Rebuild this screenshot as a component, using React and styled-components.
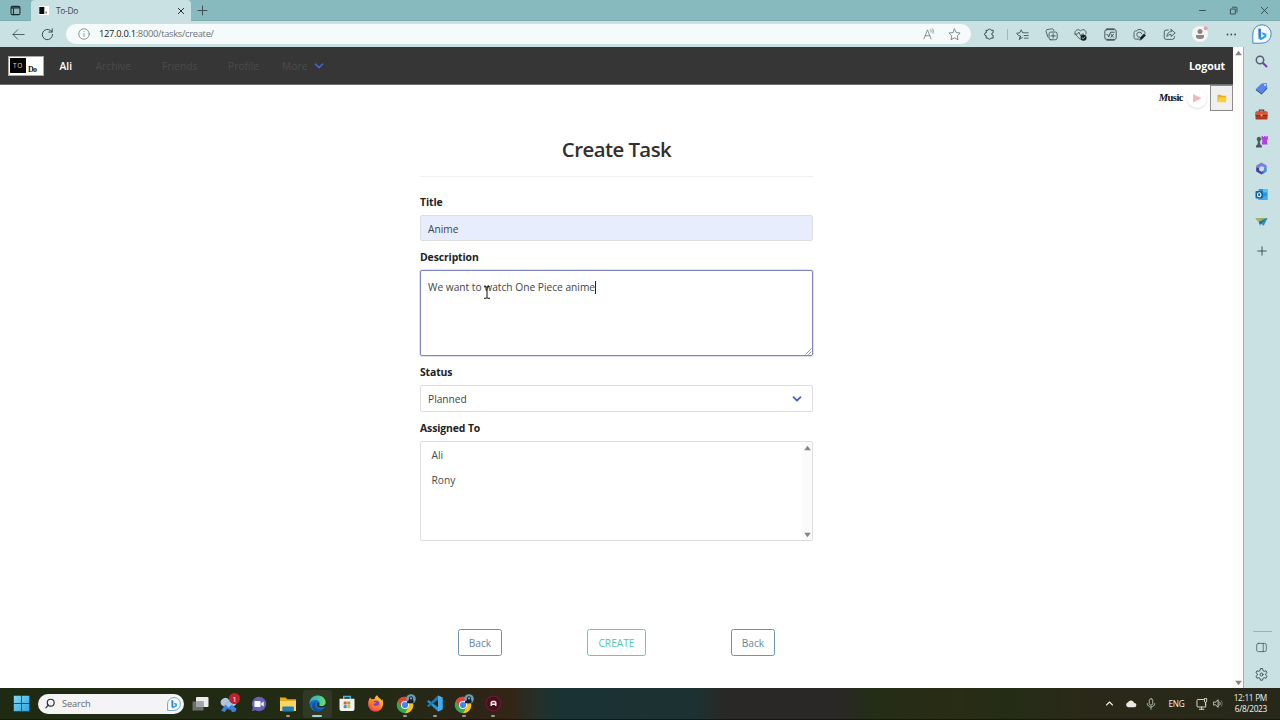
import React from 'react';
import styled, { createGlobalStyle } from 'styled-components';

const GlobalStyle = createGlobalStyle`
  * {
    box-sizing: border-box;
  }
  body {
    margin: 0;
    overflow: hidden;
    font-family: 'Open Sans', 'Noto Sans', sans-serif;
    color: #363636;
  }
  svg {
    display: block;
    flex: none;
  }
`;

const Screen = styled.div`
  display: flex;
  flex-direction: column;
  width: 1280px;
  height: 720px;
  overflow: hidden;
  background: #fff;
`;

/* ---------- browser chrome ---------- */

const TabStrip = styled.div`
  display: flex;
  height: 21px;
  background: #86babe;
`;

const TabActions = styled.div`
  display: flex;
  align-items: center;
  justify-content: center;
  width: 31px;
  border-bottom: 1px solid #7badb1;
  border-bottom-right-radius: 3px;
`;

const Tab = styled.div`
  display: flex;
  align-items: center;
  width: 160px;
  padding: 0 6px 0 8px;
  background: #cae1e3;
  border-radius: 4px 4px 0 0;
`;

const Favicon = styled.span`
  display: flex;
  width: 10px;
  height: 9px;
  background: #fff;
`;

const TabTitle = styled.span`
  flex: 1;
  margin-left: 7px;
  font-size: 8.4px;
  line-height: 12px;
  letter-spacing: -0.3px;
  color: #38474a;
`;

const NewTab = styled.div`
  display: flex;
  align-items: center;
  flex: 1;
  padding-left: 6px;
  border-bottom: 1px solid #7badb1;
`;

const WindowControls = styled.div`
  display: flex;
  align-items: center;
  gap: 22px;
  padding-right: 11px;
  border-bottom: 1px solid #7badb1;
`;

const Toolbar = styled.div`
  display: flex;
  align-items: center;
  height: 26px;
  padding-left: 3px;
  background: #cae1e3;
`;

const Slot = styled.div`
  position: relative;
  display: flex;
  align-items: center;
  justify-content: center;
  flex: none;
  width: ${(props) => props.$width || 29.4}px;
  height: ${(props) => (props.$height ? `${props.$height}px` : 'auto')};
`;

const AddressBar = styled.div`
  display: flex;
  align-items: center;
  flex: none;
  width: 905px;
  height: 20px;
  margin-left: 4px;
  padding: 0 8px 0 12px;
  border-radius: 10px;
  background: #f5fafb;
`;

const Url = styled.span`
  flex: 1;
  margin-left: 9px;
  font-size: 9.3px;
  line-height: 14px;
  letter-spacing: -0.28px;
  color: #6b7274;

  b {
    font-weight: 400;
    color: #14191a;
  }
`;

const ToolbarDivider = styled.span`
  width: 1px;
  height: 11px;
  background: #a3b8ba;
`;

const Avatar = styled.span`
  display: flex;
  align-items: center;
  justify-content: center;
  width: 16px;
  height: 16px;
  border-radius: 50%;
  background: #f3f5f5;
`;

const Workspace = styled.div`
  display: flex;
  height: 641px;
`;

const Page = styled.div`
  display: flex;
  flex-direction: column;
  width: 1233px;
  background: #fff;
`;

const PageScroll = styled.div`
  display: flex;
  flex-direction: column;
  align-items: center;
  justify-content: space-between;
  width: 10px;
  padding: 3px 0 2px;
  background: #fcfcfc;
`;

const Sidebar = styled.aside`
  display: flex;
  flex-direction: column;
  align-items: center;
  width: 37px;
  padding-top: 1px;
  border-left: 1px solid #9fb3b5;
  background: #cae1e3;
`;

const SidebarRule = styled.span`
  width: 19px;
  height: 1px;
  margin: auto 0 2px;
  background: #96b5b8;
`;

/* ---------- site ---------- */

const Navbar = styled.nav`
  display: flex;
  align-items: center;
  height: 38px;
  padding: 0 8px;
  background: #363636;
  border-bottom: 1px solid #6f6f6f;
`;

const Logo = styled.div`
  display: flex;
  width: 36px;
  height: 20px;
  padding: 1px;
  border: 1px solid #a9a9a9;
  background: #fff;
`;

const LogoLeft = styled.span`
  display: flex;
  align-items: center;
  justify-content: center;
  width: 16px;
  height: 15px;
  background: #000;
  color: #ddd;
  font-size: 6.5px;
  letter-spacing: 0.8px;
`;

const LogoRight = styled.span`
  align-self: flex-end;
  margin-left: 2px;
  font: bold 8px/9px 'Liberation Serif', serif;
  letter-spacing: -0.8px;
  color: #111;
`;

const NavItem = styled.a`
  width: ${(props) => props.$width}px;
  font-size: 10.3px;
  line-height: 16px;
  font-weight: ${(props) => (props.$active ? 600 : 400)};
  color: ${(props) => (props.$active ? '#fff' : '#4b4b4b')};
  white-space: nowrap;
`;

const Logout = styled.a`
  margin-left: auto;
  font-size: 10.6px;
  font-weight: 700;
  letter-spacing: -0.1px;
  color: #fff;
`;

const MusicBar = styled.div`
  display: flex;
  align-items: center;
  justify-content: flex-end;
  height: 26px;
`;

const MusicLabel = styled.span`
  font: bold 10.5px/14px 'Liberation Serif', serif;
  letter-spacing: -0.5px;
  color: #111;

  &::first-letter {
    font-style: italic;
  }
`;

const PlayButton = styled.span`
  display: flex;
  align-items: center;
  justify-content: center;
  width: 20px;
  height: 20px;
  margin: 0 3px 0 4px;
  border-radius: 50%;
  background: #fff;
  box-shadow: 0 1px 2px rgba(0, 0, 0, 0.14);
`;

const FolderButton = styled.span`
  display: flex;
  align-items: center;
  justify-content: center;
  width: 23px;
  height: 26px;
  border: 1px solid #8b8b8b;
  background: #efefef;
`;

const Form = styled.form`
  display: flex;
  flex-direction: column;
  width: 393px;
  margin: 23px auto 0;
`;

const Heading = styled.h1`
  height: 43px;
  margin: 0 0 17px;
  border-bottom: 1px solid #f0f0f0;
  text-align: center;
  font-size: 20.4px;
  font-weight: 600;
  line-height: 31px;
  letter-spacing: -0.55px;
  color: #303030;
`;

const Label = styled.label`
  height: 16px;
  margin-bottom: ${(props) => props.$gap || 5}px;
  font-size: 10.4px;
  font-weight: 700;
  line-height: 16px;
  letter-spacing: -0.1px;
  color: #222;
`;

const Field = styled.div`
  position: relative;
  display: flex;
  justify-content: space-between;
  height: ${(props) => props.$height}px;
  margin-bottom: ${(props) => props.$after}px;
  padding: 5px 10px 0 7px;
  border: 1px solid #dedede;
  border-radius: 2px;
  background: ${(props) => (props.$filled ? '#e7edfc' : '#fff')};
  font-size: 10.2px;
  line-height: 17px;
  color: #424446;
`;

const FocusedField = styled(Field)`
  padding-top: 8px;
  border-color: #7f85bf;
  box-shadow: 0 0 0 1px #dfe2f5;
`;

const FieldIcon = styled.span`
  padding-top: 3px;
`;

const Caret = styled.span`
  display: inline-block;
  width: 1px;
  height: 13px;
  margin-right: -1px;
  vertical-align: -3px;
  background: #222;
`;

const Pointer = styled.svg`
  position: absolute;
  left: 62px;
  top: 15px;
`;

const Grip = styled.svg`
  position: absolute;
  right: 0;
  bottom: 0;
`;

const ListBox = styled.div`
  display: flex;
  justify-content: space-between;
  height: 100px;
  border: 1px solid #dedede;
  border-radius: 2px;
`;

const Options = styled.div`
  display: flex;
  flex-direction: column;
  padding: 1px 0 0 10.5px;
`;

const Option = styled.span`
  height: 24.6px;
  font-size: 10.2px;
  line-height: 24px;
  color: #4a4a4a;
`;

const ListScroll = styled.div`
  display: flex;
  flex-direction: column;
  justify-content: space-between;
  align-items: center;
  width: 10px;
  padding: 3px 0 2px;
  background: #fbfbfb;
`;

const Actions = styled.div`
  display: grid;
  grid-template-columns: repeat(3, 136.5px);
  justify-items: center;
  width: 409.5px;
  margin: 88px auto 0;
`;

const Button = styled.span`
  width: ${(props) => props.$width}px;
  height: 27px;
  border: 1px solid ${(props) => (props.$primary ? '#5ccbb8' : '#6f93a8')};
  border-radius: 2.5px;
  text-align: center;
  font-size: 10.2px;
  line-height: 26px;
  color: ${(props) => (props.$primary ? '#4fc7b2' : '#6488a0')};
`;

/* ---------- taskbar ---------- */

const Taskbar = styled.footer`
  display: flex;
  align-items: center;
  height: 32px;
  padding-left: 13px;
  border-bottom: 1px solid #15180f;
  background: linear-gradient(
    90deg,
    #1f2a12 0,
    #222b14 330px,
    #262815 420px,
    #2d2417 480px,
    #332516 510px,
    #24302c 540px,
    #1a3234 560px,
    #1c3132 690px,
    #292826 730px,
    #2a2827 840px,
    #242d17 870px,
    #2a2c15 960px,
    #242c16 1010px,
    #2a2919 1080px,
    #272819 1280px
  );
`;

const SearchBox = styled.div`
  display: flex;
  align-items: center;
  width: 146px;
  height: 20px;
  margin: 0 1.5px 0 8px;
  padding: 0 3px 0 7px;
  border-radius: 10px;
  background: #f3f4f3;
`;

const SearchText = styled.span`
  flex: 1;
  margin-left: 6px;
  font-size: 9.2px;
  letter-spacing: -0.1px;
  color: #66696a;
`;

const AppSlot = styled(Slot)`
  height: 28px;
  border-radius: 3px;
  background: ${(props) => (props.$focused ? 'rgba(255, 255, 255, 0.07)' : 'none')};

  &::after {
    content: '';
    position: absolute;
    bottom: 1px;
    width: ${(props) => (props.$focused ? 10 : 4)}px;
    height: ${(props) => (props.$running ? 2 : 0)}px;
    border-radius: 1px;
    background: ${(props) => (props.$focused ? '#9fd3dc' : '#9b9c92')};
  }
`;

const Badge = styled.span`
  position: absolute;
  top: 3px;
  right: 4px;
  width: 11px;
  height: 11px;
  border-radius: 50%;
  background: #c2202c;
  color: #fff;
  font-size: 8px;
  line-height: 11px;
  text-align: center;
`;

const Tray = styled.div`
  display: flex;
  align-items: center;
  margin-left: auto;
  padding-right: 13px;
  color: #f1f1ee;
`;

const Language = styled.span`
  width: 33px;
  padding-right: 2px;
  text-align: center;
  font-size: 8.2px;
  letter-spacing: -0.3px;
`;

const Clock = styled.div`
  width: 41px;
  font-size: 8.3px;
  line-height: 10.6px;
  letter-spacing: -0.3px;
  text-align: right;
  white-space: nowrap;
`;

/* ---------- icons ---------- */

const Line = ({ size = 12, width = 1, color = '#33474a', view = 16, children }) => (
  <svg
    width={size}
    height={size}
    viewBox={`0 0 ${view} ${view}`}
    fill="none"
    stroke={color}
    strokeWidth={width}
    strokeLinecap="round"
    strokeLinejoin="round"
  >
    {children}
  </svg>
);

const Chevron = () => (
  <Line size={10} view={10} width={1.8} color="#485fc7">
    <path d="M1.5 3.2 5 6.7 8.5 3.2" />
  </Line>
);

const Arrow = ({ down }) => (
  <svg width="7" height="6" viewBox="0 0 7 6">
    <path d={down ? 'M.2.8h6.6L3.5 5.3Z' : 'M.2 5.3h6.6L3.5.8Z'} fill="#858585" />
  </svg>
);

const BingBubble = ({ size, border }) => (
  <svg width={size} height={size} viewBox="0 0 20 20">
    <defs>
      <linearGradient id="bing" x1="0" y1="0" x2="1" y2="1">
        <stop offset="0" stopColor="#2a66d8" />
        <stop offset="1" stopColor="#38bde8" />
      </linearGradient>
    </defs>
    <path d="M10 .8a9.2 9.2 0 1 1 0 18.4H.8V10A9.2 9.2 0 0 1 10 .8Z" fill="#f4fafd" stroke={border} strokeWidth="1" />
    <path d="M6.4 4.2 9 5.1v8.6l3.6-2.1-1.8-.9-1-2.5 4.6 1.6v3.2L9 16.2l-2.6-1.6Z" fill="url(#bing)" />
  </svg>
);

const ChromeIcon = () => (
  <svg width="21" height="20" viewBox="0 0 21 20">
    <circle cx="10" cy="11" r="8.3" fill="#36a853" />
    <path d="M2.8 6.9A8.3 8.3 0 0 1 17.2 6.9H10L6.4 13Z" fill="#e64335" />
    <path d="M17.2 6.9A8.3 8.3 0 0 1 10 19.3L13.6 13 10 6.9Z" fill="#fbc116" />
    <circle cx="10" cy="11" r="4" fill="#fff" />
    <circle cx="10" cy="11" r="3.1" fill="#4285f4" />
    <circle cx="16" cy="5" r="4.8" fill="#6d9db5" />
    <path d="M12.1 9.3c-.4-2.6 1.2-2.8 1.9-3.4-1-3.7 3.1-5 4-2 .4 1.2-.1 1.8-.3 2.2 1.8.6 1.2 2.3 0 3.2Z" fill="#17202b" />
    <circle cx="16" cy="4.3" r="1.1" fill="#8fb4c6" />
  </svg>
);

const EdgeIcon = () => (
  <svg width="17" height="17" viewBox="0 0 17 17">
    <defs>
      <linearGradient id="edge" x1="0" y1="0" x2="1" y2="0.2">
        <stop offset="0" stopColor="#2aa5df" />
        <stop offset="1" stopColor="#67da69" />
      </linearGradient>
    </defs>
    <circle cx="8.5" cy="8.5" r="8" fill="#1470bd" />
    <path d="M.5 8.4C.8 3.4 4.4.5 8.6.5c5 0 8 3.4 8 6.8 0 2.5-1.8 4-4.2 4-2 0-2.8-.8-2.2-1.6 1.6-2-.2-4.8-3.5-4.8C3.2 4.9.9 6.5.5 8.4Z" fill="url(#edge)" />
    <path d="M6.8 7C4.6 9.9 6.8 14.3 10.8 14.3c1.5 0 3-.6 4.3-1.4-1.6 2.7-4 3.7-6.3 3.6C5 16.3 2.3 12.6 3.6 9.4 4.2 8 5.3 7.2 6.8 7Z" fill="#174c98" />
    <path d="M8.2 8.2c-.9 2.6 1.4 4.6 4.4 4.4 1.3 0 2.6-.5 3.7-1.4l.5-2.4c-1 1.7-2.6 2.5-4.2 2.5-2.2 0-3-.8-2.4-1.7.4-.8-.6-2.2-2-1.4Z" fill="#1f2c17" />
  </svg>
);

const FolderIcon = ({ size }) => (
  <svg width={size} height={size} viewBox="0 0 18 18">
    <path d="M1 2.5h5.5l1.8 1.8H17V15H1Z" fill="#e5a91e" />
    <path d="M1 6h16v10H1Z" fill="#fad665" />
    <path d="M4.3 11.5h9.6a1 1 0 0 1 1 1v4H3.3v-4a1 1 0 0 1 1-1Z" fill="#1f7db9" />
  </svg>
);

const toolbarIcons = [
  <Line size={13}>
    <path d="M4.5 13 5.6 10 2.6 8.8.8 6.4 4.7 5.9 6.4 2.2 8.1 5.9H15M5.6 10 4 14.2 8 11.6M10 9.3h5M10.5 12.5H15" />
  </Line>,
  <Line size={13}>
    <path d="M7 14.5h5.5a2.5 2.5 0 0 0 2.5-2.5V7a2 2 0 0 0-2-2H7a2 2 0 0 0-2 2v5.5a2 2 0 0 0 2 2ZM3.5 11 1.3 4.2A2 2 0 0 1 2.4 2l5.8-1a2 2 0 0 1 2.2 1.2l.5 1.2M10 7v5.4M7.3 9.7h5.4" />
  </Line>,
  <Line size={13}>
    <path d="M7.7 14 2 8.2C-.8 4.7 4.2-.4 8 3.5c3.8-3.8 8.6.7 6.6 4M1 7.5h3.2L6 5l2.4 5 1.4-2.5h2" />
    <circle cx="11.8" cy="12" r="3.7" fill="#15201f" stroke="none" />
    <path d="m10.1 12.2 1.2 1.1 2.1-2.2" stroke="#cae1e3" />
  </Line>,
  <Line size={13} width={1.1}>
    <rect x="1" y="2" width="14" height="12" rx="2" />
    <path d="M3.4 1h9.2M3.4 15h9.2M3.5 8l1 .1 1.3 3L8 5.2h4.5M8.6 7.7l3 3.5M11.6 7.7l-3 3.5" />
  </Line>,
  <Line size={13}>
    <path d="M7 13.7H3.2A2 2 0 0 1 1.3 12V5.4A2 2 0 0 1 3 3.6h1.7L6 1.8h4l1.3 1.8H13a2 2 0 0 1 1.7 1.7V7" />
    <path d="M8.2 11.4A3.2 3.2 0 1 1 11 7.5" />
    <path d="m8.4 14.5.9-3.2 4.4-4 1.8 1.8-4.3 4.5Z" fill="#111c1d" />
  </Line>,
  <Line size={13}>
    <path d="M6.5 2.5H4A2.5 2.5 0 0 0 1.5 5v6.5A2.5 2.5 0 0 0 4 14h7.5a2.5 2.5 0 0 0 2.5-2.5v-1M10 1.8l5 4.4-5 4.2V8C7.7 8 6 8.7 4.8 10.5 5 6.7 7 4.6 10 4.4Z" />
  </Line>,
];

const sidebarIcons = [
  <svg width="13" height="13" viewBox="0 0 13 13">
    <circle cx="5" cy="5" r="3.7" fill="#c9e6ec" stroke="#5c5d67" strokeWidth="1.5" />
    <path d="m8.2 8.2 3.3 3.3" stroke="#8634ba" strokeWidth="2" strokeLinecap="round" />
  </svg>,
  <svg width="13" height="13" viewBox="0 0 13 13">
    <path d="M6.5 1.6 11.7 1l.5 4.2-5.6 6.1L.9 7Z" fill="#5785ec" />
    <path d="M.9 7 6.6 11.3l5.6-6.1v1.6l-5.6 5.7L.9 8.3Z" fill="#2c3fa8" />
    <circle cx="10" cy="3.1" r="1" fill="#d5e6f8" />
  </svg>,
  <svg width="13" height="13" viewBox="0 0 13 13">
    <path d="M4.3 4V2.2h4.4V4" fill="none" stroke="#7d3426" strokeWidth="1.2" />
    <rect x=".5" y="3.6" width="12" height="8" rx="1.2" fill="#b0391f" />
    <path d="M.5 4.8a1.2 1.2 0 0 1 1.2-1.2h9.6a1.2 1.2 0 0 1 1.2 1.2v2.4H.5Z" fill="#d6583a" />
    <path d="M.5 7h12v.9H.5Z" fill="#7d2c20" />
    <rect x="5.6" y="6.5" width="1.8" height="1.8" fill="#e8c1a9" />
  </svg>,
  <svg width="13" height="13" viewBox="0 0 13 13">
    <path d="M6.5 1h1.4v1H9V1h1.5v1h1V1h1.3v3.4l-.9.7.6 4.4H6.8l.7-4.4-1-.7Z" fill="#b13fe6" />
    <path d="M1 12.5v-1.7l1.4-1.2.7-3h-.7v-.9a2.2 2.2 0 1 1 3 0v.9h-.7l.7 3 1.5 1.2v1.7Z" fill="#4d5b60" />
  </svg>,
  <svg width="13" height="13" viewBox="0 0 13 13">
    <path d="M6.5.5 11.7 3.4v3L8.6 4.7 6 4.2 3.9 6.2l.2 3-2.9-1.5V3.6Z" fill="#7f7fd9" />
    <path d="M1.2 5.5 4 6l.3 2.5 2.2 1.2L9 8.6l.8 2.2-3.3 1.8L1.2 9.5Z" fill="#4340a8" />
    <path d="m9 5 2.7 1.2v3.3L6.5 12.6 8.9 8.6Z" fill="#4495d6" />
  </svg>,
  <svg width="13" height="13" viewBox="0 0 13 13">
    <rect x="3.5" y="1" width="9" height="11" rx="1" fill="#2b8fd9" />
    <path d="M8 1h4.5v3.5H8Z" fill="#52c5ee" />
    <path d="m3.5 7 4.5 2 4.5-2v5h-9Z" fill="#3bb1e6" />
    <rect x=".5" y="3" width="7.4" height="7.4" rx=".8" fill="#1064ac" />
    <ellipse cx="4.2" cy="6.7" rx="1.7" ry="2" fill="none" stroke="#fff" strokeWidth="1.1" />
  </svg>,
  <svg width="13" height="13" viewBox="0 0 13 13">
    <path d="M.5 3.5 12.5 3 8.8 10.8 5.8 8.8Z" fill="#2e91c6" />
    <path d="M.5 3.5 12.5 3 3.7 7.2Z" fill="#7fb36b" />
    <path d="M3.7 7.2 12.5 3 5.4 9v2.3Z" fill="#226a94" />
    <path d="M.5 3.5 7 3.2 3.2 6.2Z" fill="#d9a552" />
  </svg>,
];

const apps = [
  {
    icon: (
      <svg width="17" height="14" viewBox="0 0 17 14">
        <rect x="4" y="0" width="12.5" height="10" rx="1" fill="#ececea" />
        <path d="M.5 4.5h11v9H.5Z" fill="#6d6f6e" />
        <path d="M4 4.5h7.5V10H4Z" fill="#a3a5a4" />
      </svg>
    ),
  },
  {
    badge: '1',
    icon: (
      <svg width="18" height="18" viewBox="0 0 18 18">
        <path d="M1 9a4.5 4.5 0 0 1 8-4 4 4 0 0 1 7 4c-1 4-14 4-15 0Z" fill="#b3c6dc" />
        <path d="m8.5 6.5 4 .5-.3 3 4.3 3.8-1.2 3-3.3.2-1.5-2.5-1.5.3-1.7-1.3L4.8 17 1.2 15.7 5 10Z" fill="#3d83dc" />
        <path d="m8.5 6.5 4 .5-.5 2.5-3.5 3L5.5 9.5Z" fill="#9cc8f2" />
      </svg>
    ),
  },
  {
    icon: (
      <svg width="16" height="16" viewBox="0 0 16 16">
        <path d="M8 .8A7.2 7.2 0 1 1 4.5 14.3L1 15l.8-3.5A7.2 7.2 0 0 1 8 .8Z" fill="#6862b8" />
        <rect x="3.4" y="5" width="6.2" height="6" rx="1" fill="#fff" />
        <path d="m10.2 7.2 2.5-1.7v5l-2.5-1.7Z" fill="#fff" />
      </svg>
    ),
  },
  { running: true, icon: <FolderIcon size={18} /> },
  { running: true, focused: true, icon: <EdgeIcon /> },
  {
    icon: (
      <svg width="16" height="17" viewBox="0 0 16 17">
        <path d="M4.7 4V1.5h6.6V4" fill="none" stroke="#58b2d8" strokeWidth="1.4" />
        <path d="M.5 3.8h15V14a2 2 0 0 1-2 2h-11a2 2 0 0 1-2-2Z" fill="#f3f3f0" />
        <path d="M4.7 6.5h3v3h-3Z" fill="#e65a33" />
        <path d="M8.3 6.5h3v3h-3Z" fill="#73b539" />
        <path d="M4.7 10.1h3v3h-3Z" fill="#2a9bd6" />
        <path d="M8.3 10.1h3v3h-3Z" fill="#f0b41e" />
      </svg>
    ),
  },
  {
    icon: (
      <svg width="17" height="17" viewBox="0 0 17 17">
        <defs>
          <linearGradient id="fox" x1="0.8" y1="0" x2="0.2" y2="1">
            <stop offset="0" stopColor="#ffd83c" />
            <stop offset="0.5" stopColor="#ff8b26" />
            <stop offset="1" stopColor="#ee3156" />
          </linearGradient>
        </defs>
        <path d="M2 4.5 3 2.5l1.5 1.7 3-.2C8 2 9 1 10.2.3c.6 2.3 3.3 3 4.6 5.2l.4-1.2c2.6 6-.8 12.2-6.7 12.2S-.5 10.5 2 4.5Z" fill="url(#fox)" />
        <circle cx="9" cy="8.9" r="3.5" fill="#8941c5" />
        <path d="M4.8 6.8c2.4-.7 3 .5 4.4 1-1 1-2.8 1-2.8 2.2 1.7 2 4.8 1 5.4-1.2.8 2.9-1 4.8-3.6 4.8S4.3 11.5 4.8 6.8Z" fill="#fb7a2d" />
      </svg>
    ),
  },
  { running: true, icon: <ChromeIcon /> },
  {
    running: true,
    icon: (
      <svg width="17" height="17" viewBox="0 0 17 17">
        <path d="M12 .5 16.5 2.5v12L12 16.5 1 6.5 2.5 5 12 12.2Z" fill="#2495d8" />
        <path d="M12 .5 1 10.8l1.5 1.4L12 4.8Z" fill="#1b78b8" />
        <path d="m12 .5 4.5 2v12l-4.5 2Z" fill="#45acec" />
      </svg>
    ),
  },
  { running: true, icon: <ChromeIcon /> },
  {
    running: true,
    icon: (
      <svg width="17" height="17" viewBox="0 0 17 17">
        <circle cx="8.5" cy="8.5" r="7.3" fill="#45101e" stroke="#6b1a2e" strokeWidth="1.2" />
        <path d="M6.2 11V7.5L7.2 6.5h2.6l1 1V11M6.2 9.2h4.6" fill="none" stroke="#f1e8ea" strokeWidth="1.4" />
      </svg>
    ),
  },
];

const BrowserChrome = () => (
  <>
    <TabStrip>
      <TabActions>
        <Line size={11} width={1.5} color="#1d2b2d">
          <rect x="1.5" y="2" width="13" height="12" rx="2" />
          <path d="M2 4.2h12M5 5v9" />
        </Line>
      </TabActions>
      <Tab>
        <Favicon>
          <svg width="10" height="9" viewBox="0 0 10 9">
            <path d="M.3 1h5v7h-5Z" fill="#090909" />
            <path d="M6.5 5.5h1.3v2H6.5Z" fill="#555" />
          </svg>
        </Favicon>
        <TabTitle>To-Do</TabTitle>
        <Line size={8} view={8} color="#273638">
          <path d="m1.3 1.3 5.4 5.4M6.7 1.3 1.3 6.7" />
        </Line>
      </Tab>
      <NewTab>
        <Line size={11} view={11} width={0.9}>
          <path d="M5.5 1v9M1 5.5h9" />
        </Line>
      </NewTab>
      <WindowControls>
        <Line size={9} view={9} width={0.9}>
          <path d="M1.5 4.5h6" />
        </Line>
        <Line size={9} view={9} width={0.9}>
          <path d="M1.8 3h4.5v5H1.8ZM3.5 1.2h3.7q.8 0 .8.8v4.2" />
        </Line>
        <Line size={9} view={9} width={0.9}>
          <path d="m1.3 1.3 6.4 6.4M7.7 1.3 1.3 7.7" />
        </Line>
      </WindowControls>
    </TabStrip>
    <Toolbar>
      <Slot $width={30}>
        <Line size={13}>
          <path d="M15 8H1.5M7 2.2 1.2 8 7 13.8" />
        </Line>
      </Slot>
      <Slot $width={29}>
        <Line size={13} width={1.2}>
          <path d="M14.2 8A6.3 6.3 0 1 1 12 3.3l1.5 1.4M13.8 1v4H9.7" />
        </Line>
      </Slot>
      <AddressBar>
        <Line size={12} color="#6f787a">
          <circle cx="8" cy="8" r="7" />
          <path d="M8 7.5v3.8M8 4.7v.2" />
        </Line>
        <Url>
          <b>127.0.0.1</b>:8000/tasks/create/
        </Url>
        <Slot $width={34}>
          <Line size={12} color="#6a7274">
            <path d="M1.2 14.5 6 2.5l4.7 12M3 10.3h6M9.8 2c1 1 1.2 2.3.8 3.5M12.6 1c1.4 1.9 1.6 4 .6 6" />
          </Line>
        </Slot>
        <Slot $width={17}>
          <Line size={13} color="#6a7274">
            <path d="m8 1.2 2.1 4.4 4.8.6-3.5 3.4.9 4.8L8 12.1l-4.3 2.3.9-4.8L1.1 6.2l4.8-.6Z" />
          </Line>
        </Slot>
      </AddressBar>
      <Slot $width={35.5}>
        <Line size={12} width={1.3}>
          <path d="M4.5 3h2.2a2.2 2.2 0 0 1 4.2 0h2.6v3.3a1.8 1.8 0 1 0 0 3.6V13.4h-2.6a2.2 2.2 0 0 1-4.2 0H4.2V10.3a2.1 2.1 0 0 1 0-4.2Z" />
        </Line>
      </Slot>
      <ToolbarDivider />
      {toolbarIcons.map((icon, i) => (
        <Slot key={i}>{icon}</Slot>
      ))}
      <Slot $width={33}>
        <Avatar>
          <svg width="16" height="16" viewBox="0 0 16 16">
            <circle cx="8" cy="5.5" r="2.5" fill="#8e8587" />
            <path d="M4 9h8v1.5q0 2.5-4 2.5t-4-2.5Z" fill="#8e8587" />
            <circle cx="13.7" cy="2.3" r="2" fill="#f29dac" />
          </svg>
        </Avatar>
      </Slot>
      <Slot $width={29.5}>
        <svg width="11" height="3" viewBox="0 0 11 3">
          <circle cx="1.5" cy="1.5" r=".9" fill="#3b4b4d" />
          <circle cx="5.3" cy="1.5" r=".9" fill="#3b4b4d" />
          <circle cx="9.1" cy="1.5" r=".9" fill="#3b4b4d" />
        </svg>
      </Slot>
      <Slot $width={32}>
        <BingBubble size={20} border="#3f86c4" />
      </Slot>
    </Toolbar>
  </>
);

const TaskForm = () => (
  <Form>
    <Heading>Create Task</Heading>
    <Label>Title</Label>
    <Field $height={26} $after={8} $filled>
      Anime
    </Field>
    <Label>Description</Label>
    <FocusedField $height={86} $after={8}>
      <span>
        We want to watch One Piece anime
        <Caret />
      </span>
      <Pointer width="8" height="13" viewBox="0 0 8 13">
        <path d="M1 .7h2l1 .6 1-.6h2M4 1.3v10.4M1 12.3h2l1-.6 1 .6h2" fill="none" stroke="#111" />
      </Pointer>
      <Grip width="7" height="7" viewBox="0 0 7 7">
        <path d="M.5 6.5l6-6M3.5 6.5l3-3" stroke="#777" strokeWidth=".8" />
      </Grip>
    </FocusedField>
    <Label>Status</Label>
    <Field $height={27} $after={8}>
      Planned
      <FieldIcon>
        <Chevron />
      </FieldIcon>
    </Field>
    <Label>Assigned To</Label>
    <ListBox>
      <Options>
        <Option>Ali</Option>
        <Option>Rony</Option>
      </Options>
      <ListScroll>
        <Arrow />
        <Arrow down />
      </ListScroll>
    </ListBox>
  </Form>
);

const App = () => (
  <Screen>
    <GlobalStyle />
    <BrowserChrome />
    <Workspace>
      <Page>
        <Navbar>
          <Logo>
            <LogoLeft>TO</LogoLeft>
            <LogoRight>Do</LogoRight>
          </Logo>
          <Slot $width={15.5} />
          <NavItem $width={36} $active>
            Ali
          </NavItem>
          <NavItem $width={66.5}>Archive</NavItem>
          <NavItem $width={66}>Friends</NavItem>
          <NavItem $width={54}>Profile</NavItem>
          <NavItem $width={32}>More</NavItem>
          <Chevron />
          <Logout>Logout</Logout>
        </Navbar>
        <MusicBar>
          <MusicLabel>Music</MusicLabel>
          <PlayButton>
            <svg width="9" height="9" viewBox="0 0 9 9">
              <path d="M0 0v8.6L8.8 4.3Z" fill="#efb9c4" />
            </svg>
          </PlayButton>
          <FolderButton>
            <svg width="10" height="9" viewBox="0 0 10 9">
              <path d="M.5.8h3.2l1 1H9V8H.5Z" fill="#e9ac1b" />
              <path d="M1.8 3.2h8L8.6 8.3H.6Z" fill="#fbd13a" />
            </svg>
          </FolderButton>
        </MusicBar>
        <TaskForm />
        <Actions>
          <Button $width={44}>Back</Button>
          <Button $width={59} $primary>
            CREATE
          </Button>
          <Button $width={44}>Back</Button>
        </Actions>
      </Page>
      <PageScroll>
        <Arrow />
        <Arrow down />
      </PageScroll>
      <Sidebar>
        {sidebarIcons.map((icon, i) => (
          <Slot key={i} $height={26.7}>
            {icon}
          </Slot>
        ))}
        <Slot $height={32}>
          <Line size={10} view={10} width={0.9}>
            <path d="M5 .8v8.4M.8 5h8.4" />
          </Line>
        </Slot>
        <SidebarRule />
        <Slot $height={26}>
          <Line size={11}>
            <rect x="1" y="2" width="14" height="12" rx="2.5" />
            <path d="M10.5 2v12" />
          </Line>
        </Slot>
        <Slot $height={28}>
          <Line size={13} width={1.1}>
            <path d="m6.7 1-.5 2.2-1.5.9-2.2-.7L1.2 5.7l1.7 1.5v1.6l-1.7 1.5 1.3 2.3 2.2-.7 1.5.9.5 2.2h2.6l.5-2.2 1.5-.9 2.2.7 1.3-2.3-1.7-1.5V7.2l1.7-1.5-1.3-2.3-2.2.7-1.5-.9L9.3 1Z" />
            <circle cx="8" cy="8" r="1.8" />
          </Line>
        </Slot>
      </Sidebar>
    </Workspace>
    <Taskbar>
      <svg width="17" height="17" viewBox="0 0 17 17">
        <defs>
          <linearGradient id="win" x1="0" y1="0" x2="1" y2="1">
            <stop offset="0" stopColor="#7fdcf5" />
            <stop offset="1" stopColor="#2fa4e2" />
          </linearGradient>
        </defs>
        <path d="M.8.8h7.4v7.4H.8ZM8.9.8h7.4v7.4H8.9ZM.8 8.9h7.4v7.4H.8ZM8.9 8.9h7.4v7.4H8.9Z" fill="url(#win)" />
      </svg>
      <SearchBox>
        <Line size={11} width={1.7} color="#292c2c">
          <circle cx="8.3" cy="6.8" r="5" />
          <path d="M4.7 10.5 1.3 14.3" />
        </Line>
        <SearchText>Search</SearchText>
        <BingBubble size={14} border="#4489ae" />
      </SearchBox>
      {apps.map((app, i) => (
        <AppSlot key={i} $width={29.3} $running={app.running} $focused={app.focused}>
          {app.icon}
          {app.badge && <Badge>{app.badge}</Badge>}
        </AppSlot>
      ))}
      <Tray>
        <Slot $width={22}>
          <Line size={9} view={9} width={1.1} color="#eee">
            <path d="m1.5 6 3-3 3 3" />
          </Line>
        </Slot>
        <Slot $width={21}>
          <svg width="12" height="9" viewBox="0 0 12 9">
            <path d="M3 8.3a2.6 2.6 0 0 1 0-5 3.4 3.4 0 0 1 6.2.6 2.2 2.2 0 0 1 0 4.4Z" fill="#e9e9e4" />
          </svg>
        </Slot>
        <Slot $width={20}>
          <Line size={12} width={1.2} color="#b9cdc8">
            <rect x="5.7" y="1" width="4.6" height="8.5" rx="2.3" />
            <path d="M3 7.5c0 6 10 6 10 0M8 12v3" />
          </Line>
        </Slot>
        <Language>ENG</Language>
        <Slot $width={16}>
          <Line size={12} width={1.2} color="#e7e7e2">
            <path d="M10 2H2.5Q1.3 2 1.3 3.2v7.6Q1.3 12 2.5 12H13V8M4.5 15h6M7.5 12v3M11.2 1v3.3q0 1.5 1.5 1.5t1.5-1.5V1ZM12.7 6v3" />
          </Line>
        </Slot>
        <Slot $width={16}>
          <Line size={11} width={1.2} color="#e7e7e2">
            <path d="M1 6h2.6L7.5 2.5v11L3.6 10H1ZM10 6q1.3 2 0 4" />
            <path d="M12.3 4q2.8 4 0 8" stroke="#77776c" />
          </Line>
        </Slot>
        <Clock>
          <div>12:11 PM</div>
          <div>6/8/2023</div>
        </Clock>
      </Tray>
    </Taskbar>
  </Screen>
);

export default App;
